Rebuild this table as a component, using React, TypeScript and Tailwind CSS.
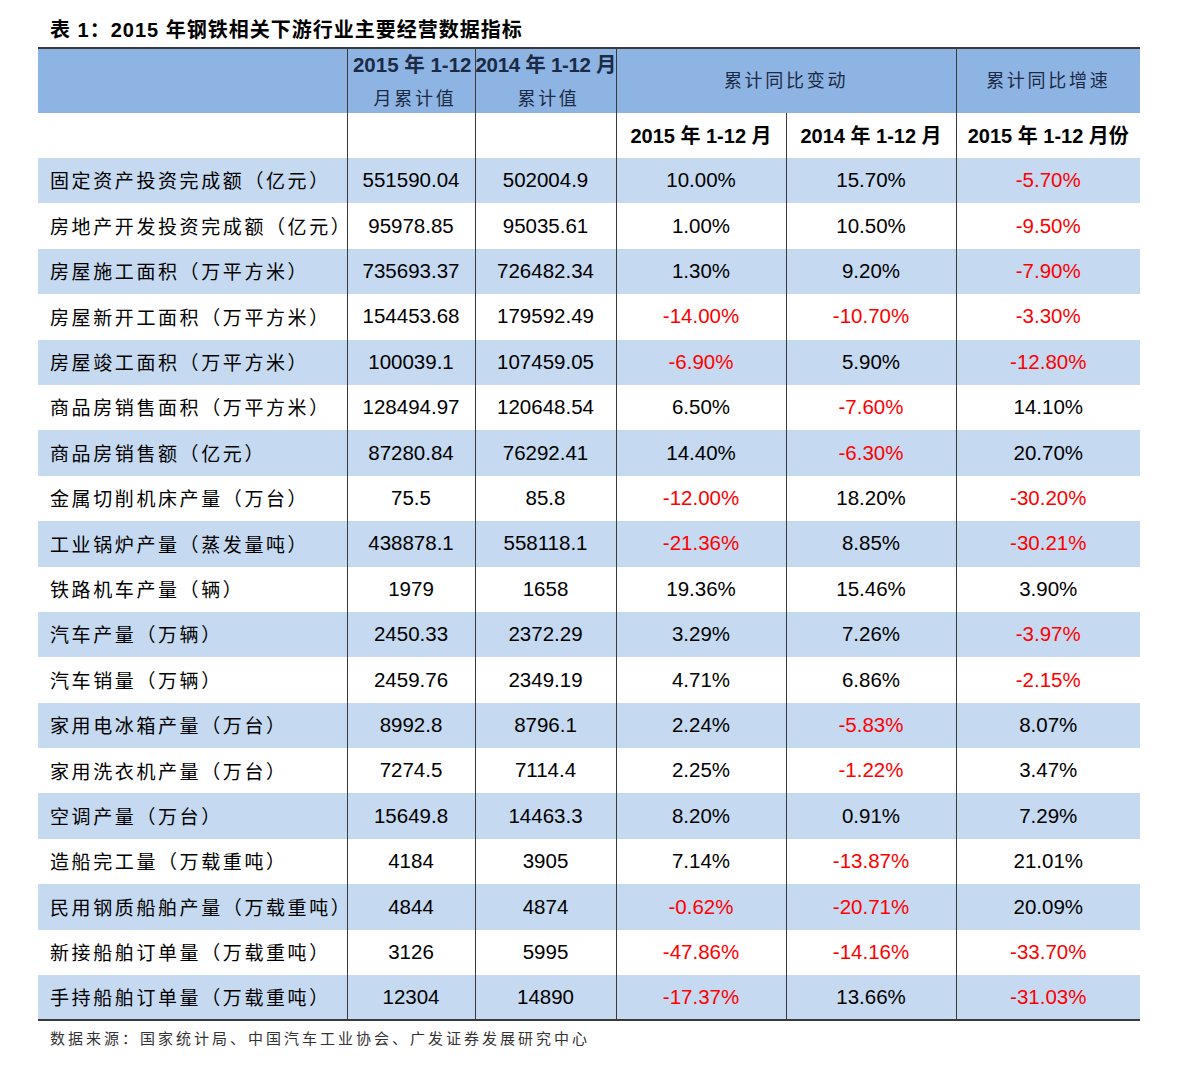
import React from "react";

const rows: string[][] = [
  ["固定资产投资完成额（亿元）", "551590.04", "502004.9", "10.00%", "15.70%", "-5.70%"],
  ["房地产开发投资完成额（亿元）", "95978.85", "95035.61", "1.00%", "10.50%", "-9.50%"],
  ["房屋施工面积（万平方米）", "735693.37", "726482.34", "1.30%", "9.20%", "-7.90%"],
  ["房屋新开工面积（万平方米）", "154453.68", "179592.49", "-14.00%", "-10.70%", "-3.30%"],
  ["房屋竣工面积（万平方米）", "100039.1", "107459.05", "-6.90%", "5.90%", "-12.80%"],
  ["商品房销售面积（万平方米）", "128494.97", "120648.54", "6.50%", "-7.60%", "14.10%"],
  ["商品房销售额（亿元）", "87280.84", "76292.41", "14.40%", "-6.30%", "20.70%"],
  ["金属切削机床产量（万台）", "75.5", "85.8", "-12.00%", "18.20%", "-30.20%"],
  ["工业锅炉产量（蒸发量吨）", "438878.1", "558118.1", "-21.36%", "8.85%", "-30.21%"],
  ["铁路机车产量（辆）", "1979", "1658", "19.36%", "15.46%", "3.90%"],
  ["汽车产量（万辆）", "2450.33", "2372.29", "3.29%", "7.26%", "-3.97%"],
  ["汽车销量（万辆）", "2459.76", "2349.19", "4.71%", "6.86%", "-2.15%"],
  ["家用电冰箱产量（万台）", "8992.8", "8796.1", "2.24%", "-5.83%", "8.07%"],
  ["家用洗衣机产量（万台）", "7274.5", "7114.4", "2.25%", "-1.22%", "3.47%"],
  ["空调产量（万台）", "15649.8", "14463.3", "8.20%", "0.91%", "7.29%"],
  ["造船完工量（万载重吨）", "4184", "3905", "7.14%", "-13.87%", "21.01%"],
  ["民用钢质船舶产量（万载重吨）", "4844", "4874", "-0.62%", "-20.71%", "20.09%"],
  ["新接船舶订单量（万载重吨）", "3126", "5995", "-47.86%", "-14.16%", "-33.70%"],
  ["手持船舶订单量（万载重吨）", "12304", "14890", "-17.37%", "13.66%", "-31.03%"],
];

const cjk = "font-['Noto_Sans_CJK_SC',sans-serif]";
const num = "font-['Liberation_Sans','Noto_Sans_CJK_SC',sans-serif]";

export default function App() {
  return (
    <div className="w-[1191px] h-[1068px] bg-white pl-[38px] pt-[17px]">
      <div
        className={`pl-[12px] h-[30px] text-[20px] leading-[26px] font-bold tracking-[1px] text-black whitespace-nowrap font-['Liberation_Sans','Noto_Sans_CJK_SC',sans-serif]`}
      >
        表 1：2015 年钢铁相关下游行业主要经营数据指标
      </div>
      <table className="border-collapse table-fixed w-[1102px]">
        <colgroup>
          <col className="w-[309px]" />
          <col className="w-[128px]" />
          <col className="w-[141px]" />
          <col className="w-[170px]" />
          <col className="w-[170px]" />
          <col className="w-[184px]" />
        </colgroup>
        <thead>
          <tr className="bg-[#8eb4e3] h-[65px] text-[#1b2a45]">
            <th className="border-t-2 border-t-[#3a3a3a] p-0"></th>
            <th className="border-t-2 border-t-[#3a3a3a] border-l border-l-[#3a3a3a] p-0 font-normal align-top">
              <div className={`${num} font-bold text-[20.5px] leading-[24px] pt-[4px] whitespace-nowrap text-right pr-[3px]`}>
                2015 年 1-12
              </div>
              <div className={`${cjk} text-[18px] tracking-[2.7px] leading-[24px] pt-[8px] whitespace-nowrap pl-[8px]`}>
                月累计值
              </div>
            </th>
            <th className="border-t-2 border-t-[#3a3a3a] border-l border-l-[#3a3a3a] p-0 font-normal align-top">
              <div className={`${num} font-bold text-[20.5px] leading-[24px] pt-[4px] whitespace-nowrap text-left pl-[0px] -tracking-[0.3px]`}>
                2014 年 1-12 月
              </div>
              <div className={`${cjk} text-[18px] tracking-[2.7px] leading-[24px] pt-[8px] whitespace-nowrap pl-[6px]`}>
                累计值
              </div>
            </th>
            <th
              colSpan={2}
              className={`border-t-2 border-t-[#3a3a3a] border-l border-l-[#3a3a3a] p-0 pb-[3px] font-normal ${cjk} text-[18px] tracking-[2.7px] whitespace-nowrap`}
            >
              累计同比变动
            </th>
            <th
              className={`border-t-2 border-t-[#3a3a3a] border-l border-l-[#3a3a3a] p-0 pb-[3px] font-normal ${cjk} text-[18px] tracking-[2.7px] whitespace-nowrap`}
            >
              累计同比增速
            </th>
          </tr>
          <tr className="bg-white h-[45px] text-black">
            <th className="p-0"></th>
            <th className="p-0 border-l border-l-[#3a3a3a]"></th>
            <th className="p-0 border-l border-l-[#3a3a3a]"></th>
            <th className={`p-0 border-l border-l-[#3a3a3a] ${num} font-bold text-[20px] whitespace-nowrap`}>
              2015 年 1-12 月
            </th>
            <th className={`p-0 border-l border-l-[#3a3a3a] ${num} font-bold text-[20px] whitespace-nowrap`}>
              2014 年 1-12 月
            </th>
            <th className={`p-0 border-l border-l-[#3a3a3a] ${num} font-bold text-[20px] whitespace-nowrap`}>
              2015 年 1-12 月份
            </th>
          </tr>
        </thead>
        <tbody>
          {rows.map((r, i) => {
            const last = i === rows.length - 1;
            return (
              <tr key={i} className={`h-[45.4px] ${i % 2 === 0 ? "bg-[#c5d9f1]" : "bg-white"}`}>
                <td
                  className={`p-0 pl-[12px] ${cjk} text-[19px] tracking-[2.6px] text-black whitespace-nowrap ${last ? "border-b-2 border-b-[#3a3a3a]" : ""}`}
                >
                  {r[0]}
                </td>
                {r.slice(1).map((v, j) => (
                  <td
                    key={j}
                    className={`p-0 text-center border-l border-l-[#3a3a3a] ${num} text-[20.5px] whitespace-nowrap ${
                      v.startsWith("-") ? "text-[#ff0000]" : "text-black"
                    } ${last ? "border-b-2 border-b-[#3a3a3a]" : ""}`}
                  >
                    {v}
                  </td>
                ))}
              </tr>
            );
          })}
        </tbody>
      </table>
      <div className={`pl-[12px] pt-[5px] ${cjk} text-[15px] tracking-[3px] leading-[24px] text-[#333333] whitespace-nowrap`}>
        数据来源：国家统计局、中国汽车工业协会、广发证券发展研究中心
      </div>
    </div>
  );
}
